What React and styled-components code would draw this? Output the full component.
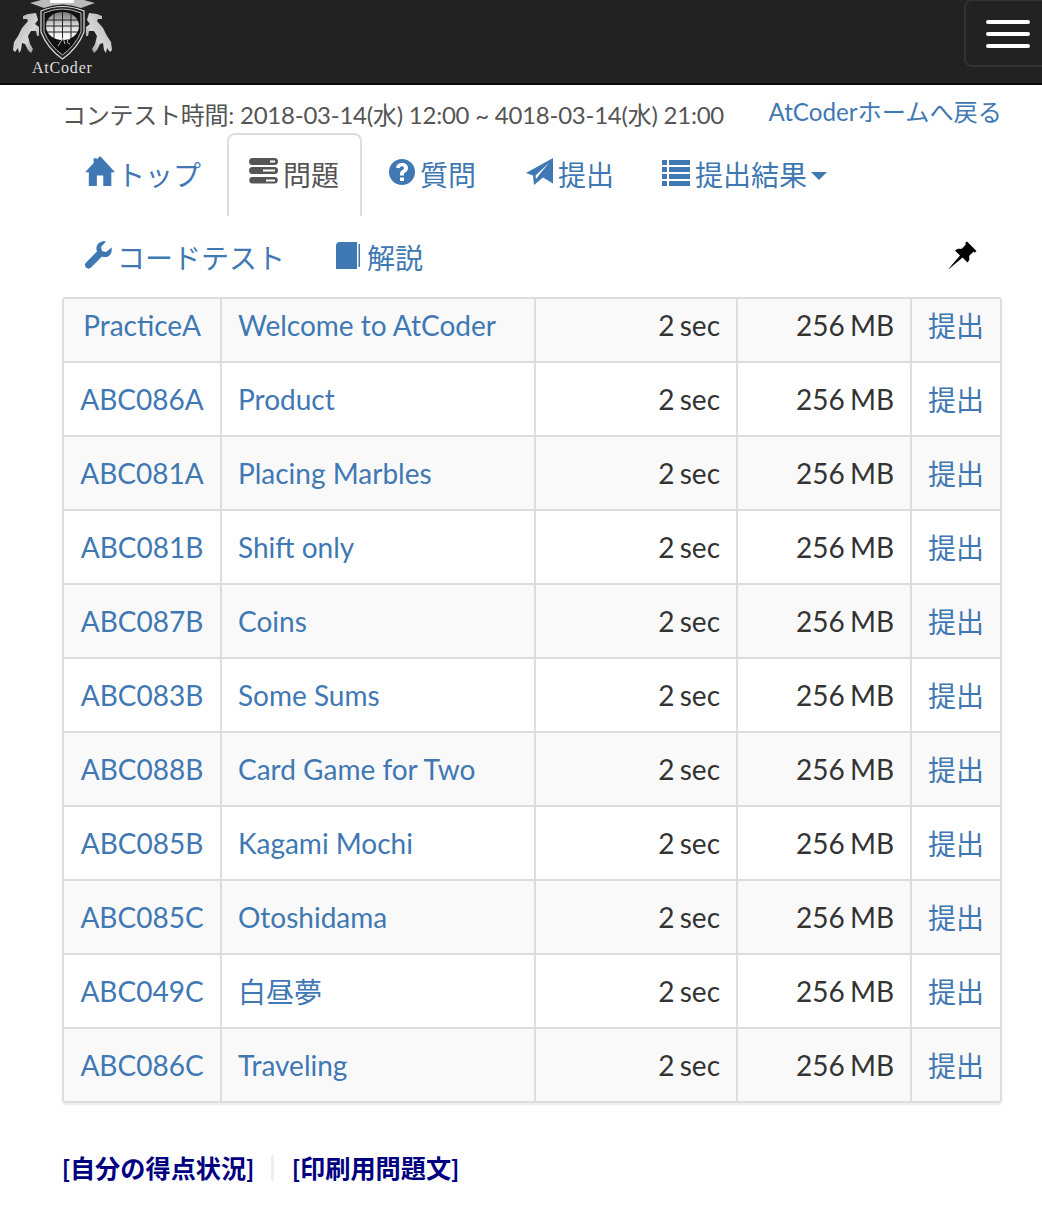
import React from 'react';
import styled, { createGlobalStyle } from 'styled-components';

const Global = createGlobalStyle`
  html, body { margin: 0; padding: 0; background: #fff; }
  body { font-family: Lato, "Noto Sans CJK JP", sans-serif; color: #333; overflow-x: hidden; }
  a { text-decoration: none; }
`;

const Page = styled.div`width: 1042px; height: 1224px; overflow: hidden;`;
const Header = styled.header`
  height: 83px; background: #222; border-bottom: 2px solid #080808;
  display: flex; justify-content: space-between; align-items: flex-start; overflow: hidden;
`;
const Logo = styled.div`
  position: relative; width: 110px; height: 83px; margin-left: 8px; flex: none;
`;
const LogoText = styled.span`
  position: absolute; left: 24px; top: 59px; font: 16px "Liberation Serif", serif; letter-spacing: 0.8px; color: #ddd;
`;
const Burger = styled.button`
  width: 90px; height: 68px; margin: -1px -12px 0 0; padding: 19px 0 0 20px; background: #222;
  border: 2px solid #333; border-radius: 8px; display: flex; flex-direction: column; gap: 8px; flex: none;
`;
const Bar = styled.span`display: block; width: 44px; height: 4px; border-radius: 2px; background: #fff;`;

const Main = styled.main`padding: 0 40px 0 62px;`;
const TimeRow = styled.div`
  height: 48px; display: flex; justify-content: space-between; align-items: flex-start; padding-top: 13px; box-sizing: border-box;
`;
const Time = styled.span`font-size: 24px; letter-spacing: -0.24px; line-height: 34px; color: #555; white-space: nowrap;`;
const Home = styled.a`font-size: 24.2px; line-height: 30px; color: #3f78b3; white-space: nowrap; margin-top: -1px;`;

const Tabs = styled.nav`display: flex; flex-wrap: wrap; width: 100%; position: relative;`;
const Tab = styled.a`
  display: flex; align-items: center; gap: ${p => p.$gap ?? 5}px; height: ${p => p.$row2 ? '82px' : '83px'};
  padding: 0 ${p => 25 - (p.$gap ?? 5)}px 3px 20px; box-sizing: border-box;
  font-size: 28px; color: ${p => p.$active ? '#555' : '#3f78b3'}; margin-right: 2px; white-space: nowrap;
  border: 2px solid ${p => p.$active ? '#ddd' : 'transparent'}; border-bottom: 0; border-radius: 8px 8px 0 0;
  svg { flex: none; overflow: visible; margin-top: -6px; }
`;
const CaretWrap = styled.span`display: inline-flex; margin-left: -1px; svg { margin-top: 4px; }`;
const TabsBreak = styled.div`flex-basis: 100%; height: 0;`;
const Pin = styled.div`position: absolute; right: 24px; top: 107px; line-height: 0;`;

const Table = styled.table`
  width: 940px; border-collapse: separate; border-spacing: 0; table-layout: fixed;
  border: 2px solid #ddd; border-radius: 4px; box-shadow: 0 2px 2px rgba(0,0,0,.08); margin-top: -1px;
  font-size: 28px;
`;
const Row = styled.tr`background: ${p => p.$odd ? '#f9f9f9' : '#fff'};`;
const Cell = styled.td`
  height: ${p => p.$first ? '52px' : '72px'}; padding: ${p => p.$first ? '0 16px 10px' : '0 16px'}; box-sizing: content-box; vertical-align: middle;
  border-top: ${p => p.$first ? 0 : '2px solid #ddd'};
  border-left: ${p => p.$lead ? 0 : '2px solid #ddd'};
  text-align: ${p => p.$align || 'left'}; white-space: nowrap; color: #333;
  word-spacing: ${p => p.$align === 'right' ? '-2px' : 0};
  a { color: #3f78b3; }
`;

const Footer = styled.div`
  display: flex; align-items: center; margin-top: 50px; font-size: 25.2px; font-weight: 700; line-height: 30px;
`;
const FootLink = styled.a`color: #000080;`;
const Sep = styled.span`display: block; width: 3px; height: 26px; background: #eee; margin: 0 18px 0 17px;`;

const rows = [
  ['PracticeA', 'Welcome to AtCoder'], ['ABC086A', 'Product'], ['ABC081A', 'Placing Marbles'],
  ['ABC081B', 'Shift only'], ['ABC087B', 'Coins'], ['ABC083B', 'Some Sums'],
  ['ABC088B', 'Card Game for Two'], ['ABC085B', 'Kagami Mochi'], ['ABC085C', 'Otoshidama'],
  ['ABC049C', '白昼夢'], ['ABC086C', 'Traveling'],
];

const Icon = ({ w = 30, h = 30, vb = '0 0 30 30', par, children }) => (
  <svg width={w} height={h} viewBox={vb} preserveAspectRatio={par} fill="currentColor">{children}</svg>
);
const HomeIcon = () => <Icon vb="0 2 28 26" par="none"><path d="M15 2 L29 16 L25.5 16 L25.5 28 L18 28 L18 19 L12 19 L12 28 L4.5 28 L4.5 16 L1 16 L9 8 L9 4 L12 4 L12 5 Z" /></Icon>;
const TasksIcon = () => (
  <Icon>
    <path fillRule="evenodd" d="M3.500 2h22a3.500 3.500 0 0 1 0 7h-22a3.500 3.500 0 0 1 0-7zM21 4.500v2h5v-2zM3.500 11h22a3.500 3.500 0 0 1 0 7h-22a3.500 3.500 0 0 1 0-7zM14 13.500v2h12v-2zM3.500 21h22a3.200 3.200 0 0 1 0 6.500h-22a3.200 3.200 0 0 1 0-6.500zM17 23.500v2h9v-2z" />
  </Icon>
);
const QIcon = () => <Icon vb="-2 -1 30 30"><path fillRule="evenodd" d="M14 2a13 13 0 1 1 0 26 13 13 0 0 1 0-26zM12 20.500v3.500h4v-3.500zM14 6c-3.400 0-5.600 1.800-6 4.800l3.700.5c.2-1.400 1-2.100 2.200-2.100s2 .7 2 1.700c0 .9-.5 1.400-1.600 2.200-1.700 1.200-2.300 2.200-2.300 4.100v1.300h4v-.9c0-1 .3-1.500 1.400-2.300 1.700-1.200 2.600-2.400 2.600-4.300C20 8 17.600 6 14 6z" /></Icon>;
const SendIcon = () => <Icon vb="-2 0 30 30"><path fillRule="evenodd" d="M28 2v25.500L18 21.500 9 29l-1-9.500L1 17zM24 7 10.500 19.500 11 23l5-6.500z" /></Icon>;
const ListIcon = () => <Icon vb="-1 0 30 30"><path d="M1 4h5v5H1zM8 4h21v5H8zM1 11h5v5H1zM8 11h21v5H8zM1 18h5v5H1zM8 18h21v5H8zM1 25h5v5H1zM8 25h21v5H8z" /></Icon>;
const Caret = () => <CaretWrap><Icon w={16} h={10} vb="0 0 16 10"><path d="M0 1h16L8 9z" /></Icon></CaretWrap>;
const WrenchIcon = () => <Icon vb="0 -2 30 30"><path d="M27.500 6.500 22 11l-4-1-1-4 5-5.500C17.500-.5 13 2 12.500 6.500c-.2 1.500 0 3 .5 4L2 21.500c-1.500 1.500-1.500 3.500 0 5s3.500 1.500 5 0L18 15.500c1.200.5 2.500.7 4 .5 4.500-.5 6.500-5 5.500-9.500z" /></Icon>;
const BookIcon = () => <Icon><path d="M7 3H24V30H3V7Q3 3 7 3Z" /><path d="M25.500 5H27V28H25.500Z" /></Icon>;
const PinIcon = () => (
  <svg width="30" height="30" viewBox="0 0 30 30" fill="#000"><path d="M19 1.500 28.500 11l-1.500 1.500-1.500-.7-4.500 4.200c.8 2.500.3 5-1.500 6.500l-5-5L1 29l-.3-.3L12 15.500l-5-5c1.800-1.800 4.200-2.300 6.500-1.500l4.300-4.500-.6-1.500z" /></svg>
);

const horse = "M15 16 L20 14 L28 13 L30 20 L27 24 L31 27 L31 36 L29 36 L28 31 L23 31 L20 36 L22 44 L25 49 L23 53 L20 50 L17 44 L14 43 L13 50 L11 53 L10 48 L7 52 L5 50 L6 42 L10 36 L14 28 L20 21 L19 19 L15 19 Z";

const LogoArt = () => (
  <svg width="110" height="60" viewBox="0 0 110 60" style={{ position: 'absolute', left: 0, top: 0 }}>
    <defs>
      <linearGradient id="s" x1="0" y1="0" x2="0" y2="1"><stop offset="0" stopColor="#777" /><stop offset=".5" stopColor="#ddd" /><stop offset="1" stopColor="#fff" /></linearGradient>
      <linearGradient id="h" x1="0" y1="0" x2="1" y2="1"><stop offset="0" stopColor="#aaa" /><stop offset=".6" stopColor="#d8d8d8" /><stop offset="1" stopColor="#888" /></linearGradient>
    </defs>
    <path d="M22 3 L36 8 Q54 1 73 8 L87 3 L76 0 L33 0 Z" fill="#bbb" />
    <path d="M42 0H66V3H42Z" fill="#fff" />
    <path d="M33 11 Q54 2 76 11 L76 32 Q70 48 54.500 59 Q39 48 33 32 Z" fill="none" stroke="#ddd" strokeWidth="1.200" />
    <path d="M36 13 Q54 5 73 13 L73 32 Q67 46 54.500 55 Q42 46 36 32 Z" fill="#111" stroke="#bbb" strokeWidth="1" />
    <ellipse cx="54.500" cy="26" rx="16.500" ry="14" fill="url(#s)" />
    <g stroke="#222" strokeWidth="1" fill="none">
      <path d="M39 20h31M38 26h33M39 32h31M54.500 12v28M46 13.500v25M63 13.500v25" />
    </g>
    <path d="M50 46 55 38 57 44M62 39c-3-1-4 5 0 5" fill="none" stroke="#ccc" strokeWidth=".9" />
    <path fill="url(#h)" d={horse} />
    <path fill="url(#h)" d={horse} transform="translate(109 0) scale(-1 1)" />
  </svg>
);

export default function App() {
  return (
    <Page>
      <Global />
      <Header>
        <Logo><LogoArt /><LogoText>AtCoder</LogoText></Logo>
        <Burger aria-label="menu"><Bar /><Bar /><Bar /></Burger>
      </Header>
      <Main>
        <TimeRow>
          <Time>コンテスト時間: 2018-03-14(水) 12:00 ~ 4018-03-14(水) 21:00</Time>
          <Home href="#">AtCoderホームへ戻る</Home>
        </TimeRow>
        <Tabs>
          <Tab href="#" $gap={3}><HomeIcon />トップ</Tab>
          <Tab href="#" $active $gap={4}><TasksIcon />問題</Tab>
          <Tab href="#" $gap={4}><QIcon />質問</Tab>
          <Tab href="#"><SendIcon />提出</Tab>
          <Tab href="#"><ListIcon />提出結果<Caret /></Tab>
          <TabsBreak />
          <Tab href="#" $row2 $gap={3}><WrenchIcon />コードテスト</Tab>
          <Tab href="#" $row2 $gap={4}><BookIcon />解説</Tab>
          <Pin><PinIcon /></Pin>
        </Tabs>
        <Table>
          <colgroup>
            <col style={{ width: 156 }} /><col style={{ width: 314 }} /><col style={{ width: 202 }} /><col style={{ width: 174 }} /><col />
          </colgroup>
          <tbody>
            {rows.map(([id, name], i) => (
              <Row key={id} $odd={i % 2 === 0}>
                <Cell $lead $first={i === 0} $align="center"><a href="#">{id}</a></Cell>
                <Cell $first={i === 0}><a href="#">{name}</a></Cell>
                <Cell $first={i === 0} $align="right">2 sec</Cell>
                <Cell $first={i === 0} $align="right">256 MB</Cell>
                <Cell $first={i === 0} $align="center"><a href="#">提出</a></Cell>
              </Row>
            ))}
          </tbody>
        </Table>
        <Footer>
          <FootLink href="#">[自分の得点状況]</FootLink>
          <Sep />
          <FootLink href="#">[印刷用問題文]</FootLink>
        </Footer>
      </Main>
    </Page>
  );
}
